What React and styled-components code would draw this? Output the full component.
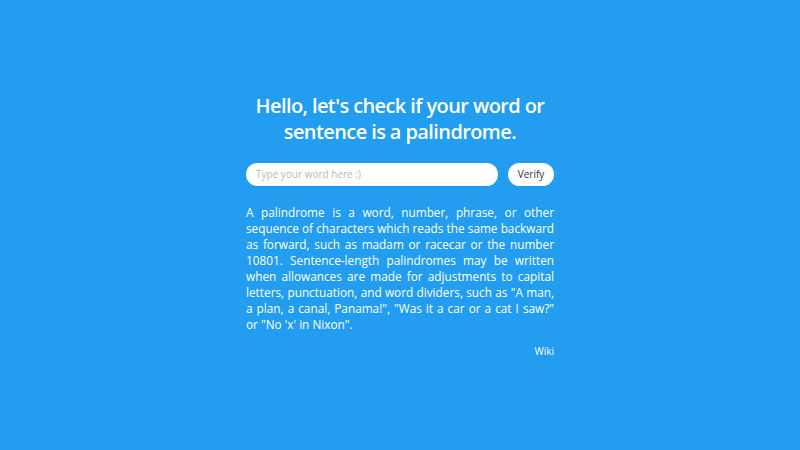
import React, { useState } from 'react';
import styled, { createGlobalStyle } from 'styled-components';

const GlobalStyle = createGlobalStyle`
  html, body {
    margin: 0;
    padding: 0;
    height: 100%;
  }
  body {
    background-color: #229def;
    font-family: "Open Sans", "Noto Sans", sans-serif;
    color: white;
  }
  #root {
    height: 100%;
  }
`;

const Page = styled.div`
  height: 100vh;
  display: flex;
  align-items: center;
  justify-content: center;
`;

const Container = styled.div`
  width: 308px;
  display: flex;
  flex-direction: column;
`;

const Title = styled.h1`
  margin: 0 -10px 18px;
  font-size: 20px;
  line-height: 26px;
  font-weight: 600;
  text-align: center;
  letter-spacing: -0.6px;
`;

const Row = styled.div`
  display: flex;
  gap: 10px;
  margin-bottom: 18px;
`;

const Input = styled.input`
  flex: 1;
  height: 23px;
  border: none;
  border-radius: 12px;
  padding: 0 10px;
  font-family: inherit;
  font-size: 10px;
  background: white;
  outline: none;
  &::placeholder {
    color: #b9b9b9;
  }
`;

const Button = styled.button`
  width: 46px;
  height: 23px;
  border: none;
  border-radius: 12px;
  background: white;
  color: #333;
  font-family: inherit;
  font-size: 10px;
  cursor: pointer;
  padding: 0;
`;

const Text = styled.p`
  margin: 0;
  font-size: 11.8px;
  line-height: 16px;
  text-align: justify;
  letter-spacing: 0;
`;

const Source = styled.a`
  align-self: flex-end;
  margin-top: 12px;
  font-size: 10px;
  color: white;
  text-decoration: none;
`;

const App = () => {
  const [word, setWord] = useState('');

  return (
    <Page>
      <GlobalStyle />
      <Container>
        <Title>Hello, let's check if your word or sentence is a palindrome.</Title>
        <Row>
          <Input
            placeholder='Type your word here :)'
            value={word}
            onChange={(e) => setWord(e.target.value)}
          />
          <Button>Verify</Button>
        </Row>
        <Text>
          A palindrome is a word, number, phrase, or other sequence of characters which reads the same backward as forward, such as madam or racecar or the number 10801. Sentence-length palindromes may be written when allowances are made for adjustments to capital letters, punctuation, and word dividers, such as "A man, a plan, a canal, Panama!", "Was it a car or a cat I saw?" or "No 'x' in Nixon".
        </Text>
        <Source href='#'>Wiki</Source>
      </Container>
    </Page>
  );
};

export default App;
